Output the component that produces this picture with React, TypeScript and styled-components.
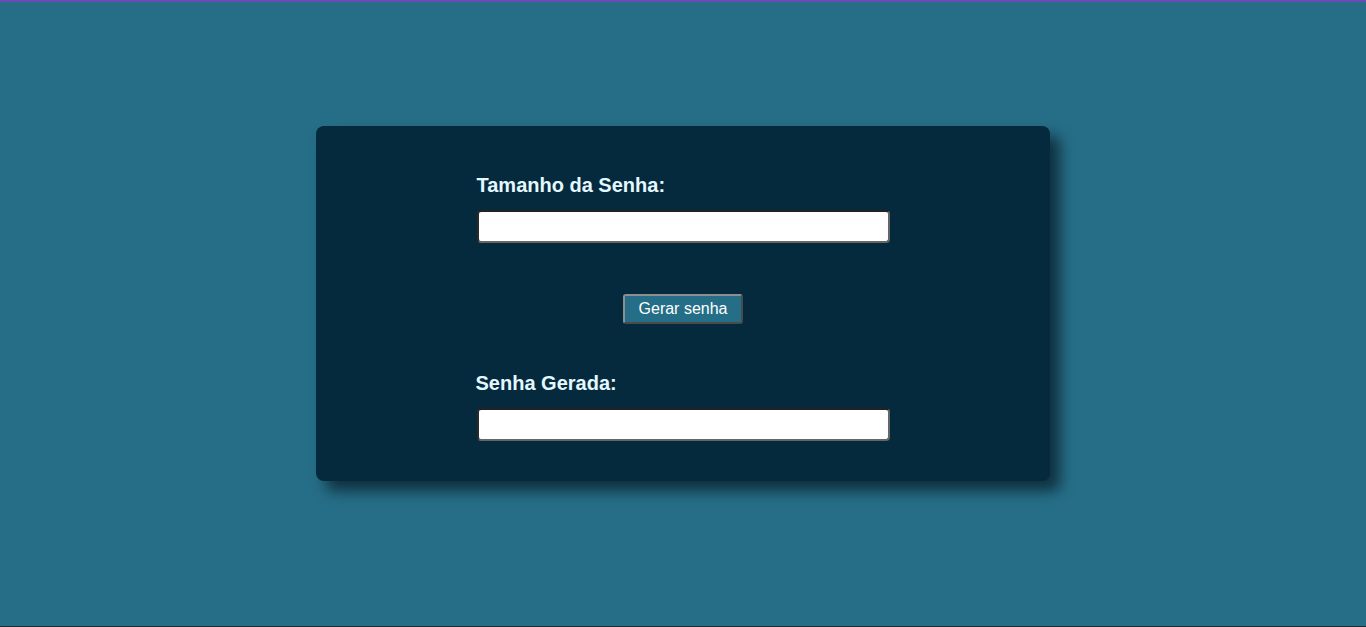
import React from "react";
import styled, { createGlobalStyle } from "styled-components";

const Global = createGlobalStyle`
  html, body { margin: 0; padding: 0; }
  body {
    background: #266e87;
    font-family: "Liberation Sans", Arial, sans-serif;
  }
`;

const Page = styled.div`
  min-height: 627px;
  box-sizing: border-box;
  border-top: 2px solid #6a4cb8;
  border-bottom: 1px solid #1e2a30;
  display: flex;
  justify-content: center;
  align-items: flex-start;
  padding-top: 124px;
`;

const Card = styled.div`
  width: 734px;
  height: 355px;
  box-sizing: border-box;
  background: #05293d;
  border-radius: 8px;
  box-shadow: 10px 10px 14px rgba(8, 30, 42, 0.75);
  display: flex;
  flex-direction: column;
  align-items: center;
  padding-top: 48px;
`;

const Field = styled.div`
  width: 413px;
  display: flex;
  flex-direction: column;
`;

const Label = styled.label<{ $shift?: number }>`
  font-size: 20px;
  font-weight: bold;
  line-height: 23px;
  color: #e4f8ff;
  margin-left: ${(p) => p.$shift ?? 0}px;
  margin-bottom: 13px;
`;

const Input = styled.input`
  width: 413px;
  height: 33px;
  box-sizing: border-box;
  background: #fff;
  border: 2px solid #767676;
  border-top-color: #222;
  border-left-color: #2a2a2a;
  border-right-color: #666;
  border-bottom-color: #666;
  border-radius: 4px;
  font-size: 16px;
  font-family: inherit;
  padding: 2px 6px;
  outline: none;
`;

const Button = styled.button`
  margin-top: 51px;
  margin-bottom: 48px;
  width: 120px;
  height: 30px;
  box-sizing: border-box;
  background: #256e87;
  color: #fff;
  font-family: inherit;
  font-size: 16px;
  border: 2px solid #8a8a8a;
  border-top-color: #8e8e8e;
  border-left-color: #8e8e8e;
  border-right-color: #4a4a4a;
  border-bottom-color: #4a4a4a;
  border-radius: 3px;
  padding: 0;
  cursor: pointer;
`;

export default function App() {
  return (
    <>
      <Global />
      <Page>
        <Card>
          <Field>
            <Label htmlFor="tam">Tamanho da Senha:</Label>
            <Input id="tam" type="text" />
          </Field>
          <Button>Gerar senha</Button>
          <Field>
            <Label htmlFor="gerada" $shift={-1}>Senha Gerada:</Label>
            <Input id="gerada" type="text" readOnly />
          </Field>
        </Card>
      </Page>
    </>
  );
}
